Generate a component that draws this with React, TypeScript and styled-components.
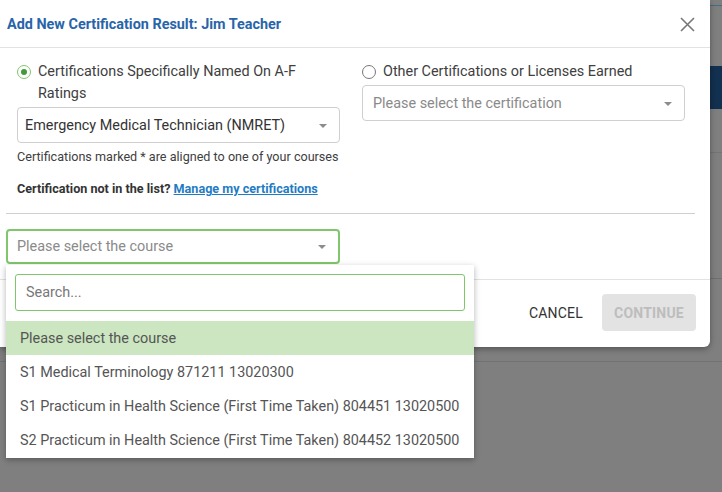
import React from 'react';
import styled, { createGlobalStyle } from 'styled-components';

const GlobalStyle = createGlobalStyle`
  html, body {
    margin: 0;
    padding: 0;
    width: 722px;
    height: 492px;
    overflow: hidden;
    font-family: Roboto, "Liberation Sans", Arial, sans-serif;
  }
  * { box-sizing: border-box; }
`;

const colors = {
  green: '#7fc66c',
  greenDark: '#3f9b3c',
  greenLight: '#cbe6c0',
  blue: '#2864a9',
  link: '#1f7cc4',
  text: '#404040',
  muted: '#8a8a8a',
  border: '#cfcfcf',
};

const courses = [
  'Please select the course',
  'S1 Medical Terminology 871211 13020300',
  'S1 Practicum in Health Science (First Time Taken) 804451 13020500',
  'S2 Practicum in Health Science (First Time Taken) 804452 13020500',
];

const Screen = styled.div`
  position: relative;
  width: 722px;
  height: 492px;
  background: #7f7f7f;
  overflow: hidden;
`;

/* page behind the dim overlay */
const BackPage = styled.div`
  display: flex;
  flex-direction: column;
  height: 100%;
`;

const BackStrip = styled.div<{ $h: number; $bg?: string; $line?: string }>`
  height: ${(p) => p.$h}px;
  flex-shrink: 0;
  background: ${(p) => p.$bg || 'transparent'};
  border-bottom: ${(p) => (p.$line ? `1px solid ${p.$line}` : 'none')};
`;

const Modal = styled.div`
  position: absolute;
  left: 0;
  top: 0;
  width: 710px;
  height: 347px;
  background: #fff;
  border-radius: 0 0 6px 0;
  box-shadow: 0 2px 6px rgba(0, 0, 0, 0.35);
  display: flex;
  flex-direction: column;
`;

const Header = styled.div`
  height: 48px;
  padding: 0 14px 0 7px;
  display: flex;
  align-items: center;
  justify-content: space-between;
  border-bottom: 1px solid #e2e2e2;
`;

const Title = styled.h2`
  margin: 0;
  font-size: 14.4px;
  font-weight: 700;
  color: ${colors.blue};
  margin-top: 1px;
`;

const CloseButton = styled.button`
  border: none;
  background: none;
  padding: 0;
  width: 18px;
  height: 18px;
  display: flex;
  align-items: center;
  justify-content: center;
  cursor: pointer;
  margin-top: 1px;
`;

const Body = styled.div`
  flex: 1;
  padding: 13px 0 0 6px;
  display: flex;
  flex-direction: column;
`;

const Columns = styled.div`
  display: grid;
  grid-template-columns: 323px 323px;
  column-gap: 22px;
  padding-left: 11px;
`;

const Column = styled.div`
  display: flex;
  flex-direction: column;
`;

const RadioRow = styled.label`
  display: flex;
  align-items: flex-start;
  gap: 7px;
  font-size: 14.4px;
  line-height: 22px;
  color: ${colors.text};
  margin-bottom: 2px;
`;

const RadioCircle = styled.span<{ $checked?: boolean }>`
  width: 14px;
  height: 14px;
  margin-top: 4px;
  border-radius: 50%;
  flex-shrink: 0;
  border: 1px solid ${(p) => (p.$checked ? colors.green : '#777')};
  display: flex;
  align-items: center;
  justify-content: center;
  &::after {
    content: '';
    width: 6px;
    height: 6px;
    border-radius: 50%;
    background: ${(p) => (p.$checked ? colors.greenDark : 'transparent')};
  }
`;

const Select = styled.div<{ $focused?: boolean; $placeholder?: boolean; $w?: number; $pad?: number }>`
  height: ${(p) => (p.$focused ? 35 : 36)}px;
  width: ${(p) => (p.$w ? `${p.$w}px` : '100%')};
  border: ${(p) => (p.$focused ? `2px solid ${colors.green}` : `1px solid ${colors.border}`)};
  border-radius: 4px;
  display: flex;
  align-items: center;
  justify-content: space-between;
  padding: 0 12px 0 ${(p) => p.$pad ?? 7}px;
  font-size: 14.4px;
  color: ${(p) => (p.$placeholder ? colors.muted : '#333')};
  background: #fff;
`;

const Caret = styled.span`
  width: 0;
  height: 0;
  border-left: 4px solid transparent;
  border-right: 4px solid transparent;
  border-top: 4px solid #8c8c8c;
  margin-top: 1px;
`;

const Helper = styled.p`
  margin: 6px 0 0;
  font-size: 12.6px;
  line-height: 16px;
  color: ${colors.text};
`;

const NotInList = styled.p`
  margin: 16px 0 0;
  font-size: 12.6px;
  line-height: 16px;
  font-weight: 700;
  color: #333;
`;

const ManageLink = styled.a`
  color: ${colors.link};
  text-decoration: underline;
  cursor: pointer;
`;

const Divider = styled.hr`
  margin: 16px 0 15px;
  width: 689px;
  border: none;
  border-top: 1px solid #cfcfcf;
`;

const Footer = styled.div`
  height: 68px;
  border-top: 1px solid #e2e2e2;
  display: flex;
  align-items: center;
  justify-content: flex-end;
  gap: 5px;
  padding: 0 14px 2px 0;
`;

const FooterButton = styled.button<{ $primary?: boolean }>`
  height: 37px;
  padding: 0 ${(p) => (p.$primary ? 12 : 14)}px;
  border: none;
  border-radius: 4px;
  font-family: inherit;
  font-size: 14px;
  letter-spacing: 0.2px;
  font-weight: ${(p) => (p.$primary ? 700 : 400)};
  color: ${(p) => (p.$primary ? '#bdbdbd' : '#333')};
  background: ${(p) => (p.$primary ? '#e3e3e3' : 'transparent')};
  min-width: ${(p) => (p.$primary ? 94 : 82)}px;
`;

const Menu = styled.div`
  position: absolute;
  left: 6px;
  top: 265px;
  width: 468px;
  background: #fff;
  box-shadow: 0 2px 6px rgba(0, 0, 0, 0.3);
  padding: 9px 0 1px;
  display: flex;
  flex-direction: column;
`;

const SearchInput = styled.input`
  margin: 0 9px 10px;
  height: 37px;
  border: 1px solid ${colors.green};
  border-radius: 3px;
  padding: 0 10px;
  font-family: inherit;
  font-size: 14.4px;
  color: #333;
  outline: none;
  &::placeholder {
    color: #777;
  }
`;

const Option = styled.div<{ $active?: boolean }>`
  height: 34px;
  display: flex;
  align-items: center;
  padding-left: 14px;
  font-size: 14.4px;
  color: #555;
  background: ${(p) => (p.$active ? colors.greenLight : '#fff')};
`;

const App = () => {
  return (
    <>
      <GlobalStyle />
      <Screen>
        <BackPage>
          <BackStrip $h={5} />
          <BackStrip $h={1} $bg="#3f6f86" />
          <BackStrip $h={60} />
          <BackStrip $h={43} $bg="#12304f" />
          <BackStrip $h={44} $line="#747474" />
          <BackStrip $h={126} $line="#6f6f6f" />
          <BackStrip $h={83} $line="#727272" />
        </BackPage>

        <Modal>
          <Header>
            <Title>Add New Certification Result: Jim Teacher</Title>
            <CloseButton aria-label="close">
              <svg width="15" height="15" viewBox="0 0 15 15">
                <path d="M1 1 L14 14 M14 1 L1 14" stroke="#777" strokeWidth="1.6" />
              </svg>
            </CloseButton>
          </Header>

          <Body>
            <Columns>
              <Column>
                <RadioRow>
                  <RadioCircle $checked />
                  <span>Certifications Specifically Named On A-F Ratings</span>
                </RadioRow>
                <Select>
                  <span>Emergency Medical Technician (NMRET)</span>
                  <Caret />
                </Select>
                <Helper>Certifications marked * are aligned to one of your courses</Helper>
                <NotInList>
                  Certification not in the list? <ManageLink>Manage my certifications</ManageLink>
                </NotInList>
              </Column>
              <Column>
                <RadioRow>
                  <RadioCircle />
                  <span>Other Certifications or Licenses Earned</span>
                </RadioRow>
                <Select $placeholder $pad={10}>
                  <span>Please select the certification</span>
                  <Caret />
                </Select>
              </Column>
            </Columns>

            <Divider />

            <Select $focused $placeholder $w={334} $pad={9}>
              <span>Please select the course</span>
              <Caret />
            </Select>
          </Body>

          <Footer>
            <FooterButton>CANCEL</FooterButton>
            <FooterButton $primary disabled>
              CONTINUE
            </FooterButton>
          </Footer>
        </Modal>

        <Menu>
          <SearchInput placeholder="Search..." />
          {courses.map((c, i) => (
            <Option key={c} $active={i === 0}>
              {c}
            </Option>
          ))}
        </Menu>
      </Screen>
    </>
  );
};

export default App;
